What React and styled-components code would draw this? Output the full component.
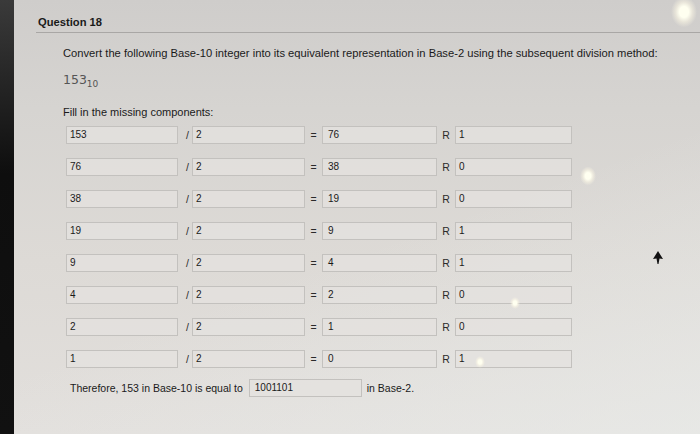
import React from 'react'
import styled, { createGlobalStyle } from 'styled-components'

const Global = createGlobalStyle`
  html, body { margin: 0; padding: 0; }
  body {
    width: 700px;
    height: 434px;
    overflow: hidden;
    background: #1a1a1a;
    font-family: "Liberation Sans", Arial, sans-serif;
    color: #1a1a1a;
  }
`

// the photographed monitor: dark bezel on the left, screen after it
const Frame = styled.div`
  position: relative;
  display: flex;
  width: 700px;
  height: 434px;
`
const Bezel = styled.div`
  width: 14px;
  background: linear-gradient(180deg, #3a3a3a 0%, #0e0e0e 40%, #111 100%);
`
const Screen = styled.div`
  flex: 1;
  padding: 16px 0 0 22px;
  background:
    linear-gradient(160deg, rgba(255,255,255,0) 55%, rgba(235,238,236,0.6) 100%),
    linear-gradient(180deg, #cfcdcb 0%, #d6d4d1 25%, #dddad6 60%, #e2dfdc 100%);
`
const Title = styled.div`
  font-size: 11.2px;
  font-weight: bold;
  color: #1a1a1a;
  padding: 0 0 4px 2px;
  border-bottom: 1px solid #a9a7a5;
`
const Body = styled.div`
  padding: 13px 0 0 27px;
`
const Prompt = styled.div`
  font-size: 11.2px;
  line-height: 14px;
  color: #1a1a1a;
`
const Number = styled.div`
  margin-top: 12px;
  font-family: "DejaVu Sans", sans-serif;
  font-size: 12.5px;
  color: #555;
  sub {
    font-size: 9px;
    vertical-align: -3px;
  }
`
const Hint = styled.div`
  margin-top: 17px;
  font-size: 11px;
  color: #1a1a1a;
`
const Table = styled.div`
  margin: 8px 0 0 3px;
  display: grid;
  grid-template-columns: 112px 14px 113px 17px 115px 18px 117px;
  grid-auto-rows: 18px;
  row-gap: 14px;
  align-items: center;
`
const Field = styled.div`
  height: 18px;
  box-sizing: border-box;
  border: 1px solid #c3c1be;
  background: rgba(228, 226, 223, 0.75);
  font-size: 10px;
  line-height: 16px;
  padding-left: ${p => (p.$tight ? 3 : 5)}px;
  color: #1a1a1a;
`
const Op = styled.span`
  font-size: 10.5px;
  color: #2a2a2a;
  text-align: ${p => p.$align || 'center'};
  padding-right: ${p => (p.$align === 'right' ? 3 : 0)}px;
`
const Answer = styled.div`
  margin: 11px 0 0 7px;
  display: flex;
  align-items: center;
  font-size: 10.5px;
  color: #1a1a1a;
`
const AnswerField = styled(Field)`
  width: 113px;
  margin: 0 5px 0 6px;
  font-size: 10px;
`
const Glare = styled.div`
  position: absolute;
  left: ${p => p.$x}px;
  top: ${p => p.$y}px;
  width: ${p => p.$s}px;
  height: ${p => p.$s * 1.2}px;
  border-radius: 50%;
  background: radial-gradient(closest-side, rgba(255,255,240,1) 35%, rgba(255,250,230,0.5) 65%, rgba(255,255,255,0));
  transform: translate(-50%, -50%);
`
const Pointer = styled.svg`
  position: absolute;
  left: 653px;
  top: 251px;
`

const rows = [
  [153, 76, 1],
  [76, 38, 0],
  [38, 19, 0],
  [19, 9, 1],
  [9, 4, 1],
  [4, 2, 0],
  [2, 1, 0],
  [1, 0, 1],
]

const App = () => (
  <Frame>
    <Global />
    <Bezel />
    <Screen>
      <Title>Question 18</Title>
      <Body>
        <Prompt>
          Convert the following Base-10 integer into its equivalent representation in Base-2 using the subsequent division method:
        </Prompt>
        <Number>153<sub>10</sub></Number>
        <Hint>Fill in the missing components:</Hint>
        <Table>
          {rows.map(([n, q, r]) => (
            <React.Fragment key={n}>
              <Field $tight>{n}</Field>
              <Op $align="right">/</Op>
              <Field $tight>2</Field>
              <Op>=</Op>
              <Field>{q}</Field>
              <Op>R</Op>
              <Field $tight>{r}</Field>
            </React.Fragment>
          ))}
        </Table>
        <Answer>
          Therefore, 153 in Base-10 is equal to
          <AnswerField>1001101</AnswerField>
          in Base-2.
        </Answer>
      </Body>
    </Screen>
    <Glare $x={684} $y={12} $s={26} />
    <Glare $x={588} $y={176} $s={16} />
    <Glare $x={515} $y={303} $s={10} />
    <Glare $x={480} $y={362} $s={10} />
    <Pointer width="10" height="14" viewBox="0 0 10 14">
      <path d="M5 0 L10 8 L6.5 7.5 L5.5 13 L4.5 13 L3.5 7.5 L0 8 Z" fill="#111" />
    </Pointer>
  </Frame>
)

export default App
